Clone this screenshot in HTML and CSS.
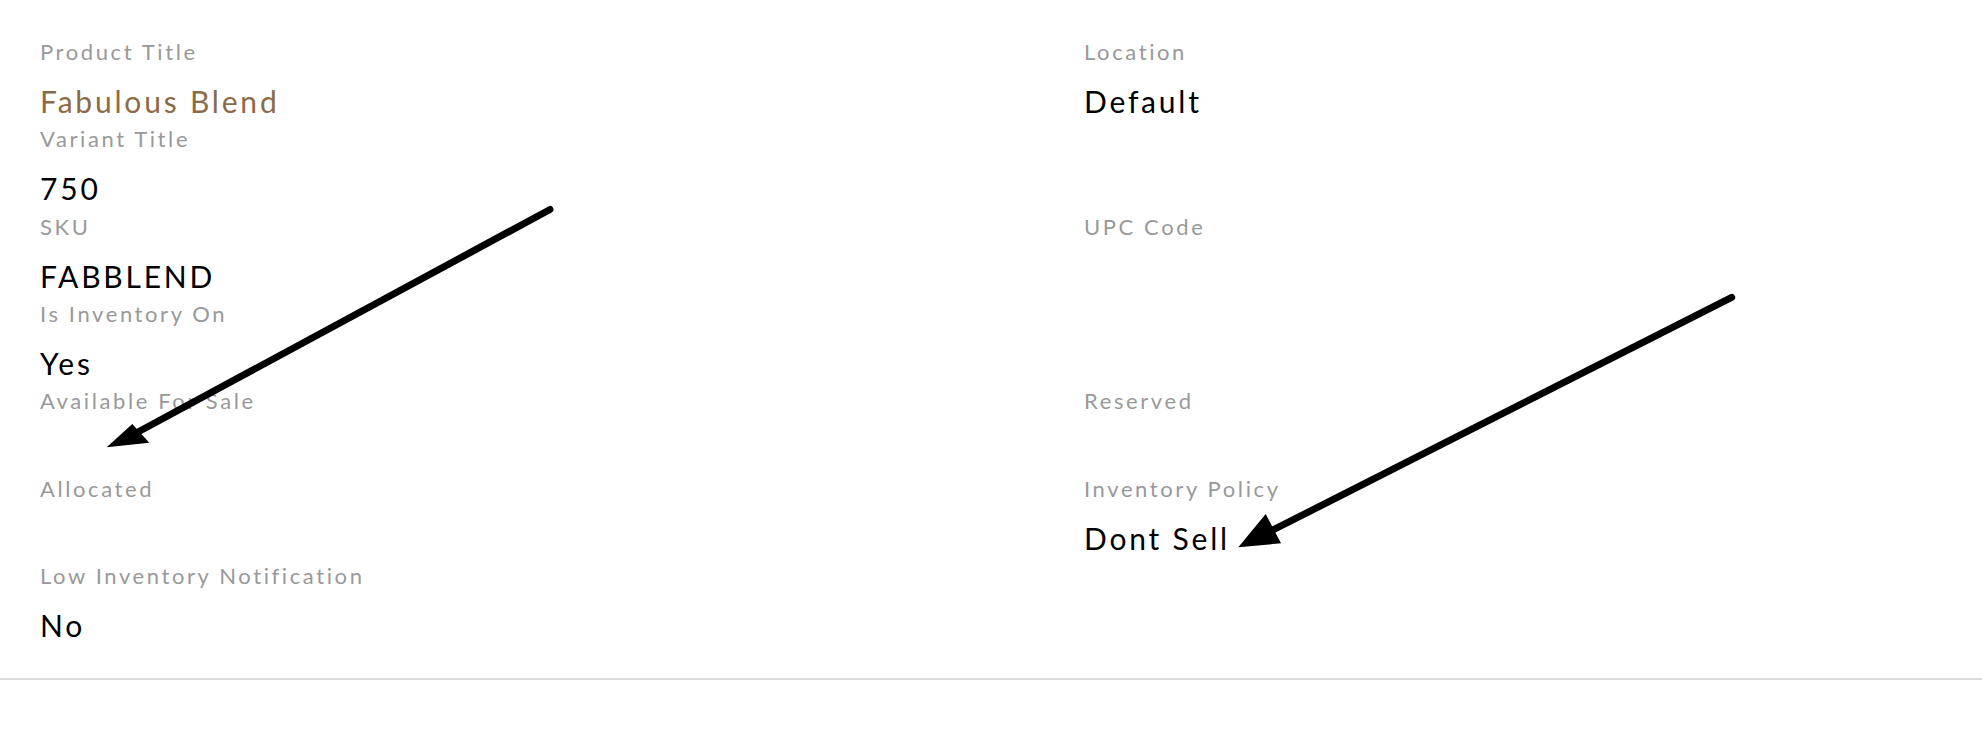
FILE: index.html
```html
<!DOCTYPE html>
<html lang="en">
<head>
<meta charset="utf-8">
<title>Variant Inventory</title>
<link rel="stylesheet" href="styles.css">
</head>
<body>
<div class="page">
  <section class="details">
    <div class="field"><div class="label">Product Title</div><div class="value title">Fabulous Blend</div></div>
    <div class="field"><div class="label">Location</div><div class="value">Default</div></div>

    <div class="field"><div class="label">Variant Title</div><div class="value">750</div></div>
    <div class="field"></div>

    <div class="field"><div class="label">SKU</div><div class="value">FABBLEND</div></div>
    <div class="field"><div class="label">UPC Code</div><div class="value"></div></div>

    <div class="field"><div class="label">Is Inventory On</div><div class="value">Yes</div></div>
    <div class="field"></div>

    <div class="field"><div class="label">Available For Sale</div><div class="value"></div></div>
    <div class="field"><div class="label">Reserved</div><div class="value"></div></div>

    <div class="field"><div class="label">Allocated</div><div class="value"></div></div>
    <div class="field"><div class="label">Inventory Policy</div><div class="value">Dont Sell</div></div>

    <div class="field"><div class="label">Low Inventory Notification</div><div class="value">No</div></div>
    <div class="field"></div>
  </section>
  <hr class="divider">
  <section class="next">
    <div class="label">Inventory Reports</div>
  </section>

  <svg class="annotations" width="1982" height="744" viewBox="0 0 1982 744" aria-hidden="true">
    <line x1="550" y1="209.5" x2="138" y2="432" stroke="#000" stroke-width="7" stroke-linecap="round"/>
    <polygon points="106.7,447.3 132.3,424 149.3,442.7" fill="#000"/>
    <line x1="1731.7" y1="297.3" x2="1271" y2="531" stroke="#000" stroke-width="7" stroke-linecap="round"/>
    <polygon points="1238.3,547.3 1265.7,514 1281,543.3" fill="#000"/>
  </svg>
</div>
</body>
</html>
```

FILE: styles.css
```css
* { box-sizing: border-box; }

html, body {
  margin: 0;
  padding: 0;
  background: #ffffff;
}

body {
  font-family: Lato, "Open Sans", "Liberation Sans", sans-serif;
  font-weight: 400;
  color: #000;
  overflow: hidden;
  height: 744px;
}

.page {
  position: relative;
  width: 1982px;
  height: 744px;
}

.details {
  display: grid;
  grid-template-columns: 1044px 1fr;
  padding: 35px 40px 0 40px;
}

.field {
  height: 87.33px;
}

.label {
  font-size: 22px;
  line-height: 34px;
  height: 34px;
  color: #999999;
  letter-spacing: 2.6px;
  white-space: nowrap;
}

.value {
  margin-top: 11px;
  font-size: 30px;
  line-height: 42px;
  height: 42px;
  color: #000;
  letter-spacing: 2.8px;
  white-space: nowrap;
}

.value.title {
  color: #8b6b47;
}

.divider {
  margin: 32px 0 0 0;
  border: 0;
  height: 2px;
  background: #dcdcdc;
}

.next {
  padding: 54px 40px 0 40px;
}

.annotations {
  position: absolute;
  left: 0;
  top: 0;
  pointer-events: none;
}
```
